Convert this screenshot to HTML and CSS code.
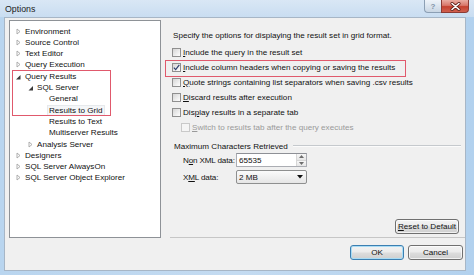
FILE: index.html
```html
<!DOCTYPE html>
<html>
<head>
<meta charset="utf-8">
<link rel="stylesheet" href="styles.css">
</head>
<body>
<div class="window">
  <div class="titlebar">
    <span class="title">Options</span>
    <div class="caption-btns">
      <div class="cbtn help">?</div>
      <div class="cbtn close">
        <svg width="11" height="9" viewBox="0 0 11 9"><path d="M2 1.5 L9 7.5 M9 1.5 L2 7.5" stroke="#5a1d17" stroke-width="3" stroke-linecap="round"/><path d="M2 1.5 L9 7.5 M9 1.5 L2 7.5" stroke="#ffffff" stroke-width="1.6" stroke-linecap="round"/></svg>
      </div>
    </div>
  </div>
  <div class="client">
    <div class="main">
      <div class="tree">
        <div class="node l0"><span class="arr"><svg width="9" height="11"><polygon points="1,3 4,5.5 1,8" fill="none" stroke="#a6a6a6" stroke-width="0.9"/></svg></span>Environment</div>
        <div class="node l0"><span class="arr"><svg width="9" height="11"><polygon points="1,3 4,5.5 1,8" fill="none" stroke="#a6a6a6" stroke-width="0.9"/></svg></span>Source Control</div>
        <div class="node l0"><span class="arr"><svg width="9" height="11"><polygon points="1,3 4,5.5 1,8" fill="none" stroke="#a6a6a6" stroke-width="0.9"/></svg></span>Text Editor</div>
        <div class="node l0"><span class="arr"><svg width="9" height="11"><polygon points="1,3 4,5.5 1,8" fill="none" stroke="#a6a6a6" stroke-width="0.9"/></svg></span>Query Execution</div>
        <div class="hl-group">
          <div class="node l0"><span class="arr"><svg width="9" height="11"><polygon points="4.5,4 4.5,8.5 0,8.5" fill="#3a3a3a"/></svg></span>Query Results</div>
          <div class="node l1"><span class="arr"><svg width="9" height="11"><polygon points="5,4 5,8.5 0.5,8.5" fill="#3a3a3a"/></svg></span>SQL Server</div>
          <div class="node l2"><span class="arr"></span>General</div>
          <div class="node l2"><span class="arr"></span><span class="sel">Results to Grid</span></div>
        </div>
        <div class="node l2"><span class="arr"></span>Results to Text</div>
        <div class="node l2"><span class="arr"></span>Multiserver Results</div>
        <div class="node l1"><span class="arr"><svg width="9" height="11"><polygon points="1,3 4,5.5 1,8" fill="none" stroke="#a6a6a6" stroke-width="0.9"/></svg></span>Analysis Server</div>
        <div class="node l0"><span class="arr"><svg width="9" height="11"><polygon points="1,3 4,5.5 1,8" fill="none" stroke="#a6a6a6" stroke-width="0.9"/></svg></span>Designers</div>
        <div class="node l0"><span class="arr"><svg width="9" height="11"><polygon points="1,3 4,5.5 1,8" fill="none" stroke="#a6a6a6" stroke-width="0.9"/></svg></span>SQL Server AlwaysOn</div>
        <div class="node l0"><span class="arr"><svg width="9" height="11"><polygon points="1,3 4,5.5 1,8" fill="none" stroke="#a6a6a6" stroke-width="0.9"/></svg></span>SQL Server Object Explorer</div>
      </div>
      <div class="pane">
        <div class="desc">Specify the options for displaying the result set in grid format.</div>
        <div class="checks">
          <div class="chk"><span class="box"></span><span><u>I</u>nclude the query in the result set</span></div>
          <div class="chk marked"><span class="box"><svg width="7" height="7" viewBox="0 0 7 7"><path d="M0.8 3.6 L2.7 5.6 L6.3 0.9" fill="none" stroke="#2c3f6e" stroke-width="1.2"/></svg></span><span><u>I</u>nclude column headers when copying or saving the results</span></div>
          <div class="chk"><span class="box"></span><span><u>Q</u>uote strings containing list separators when saving .csv results</span></div>
          <div class="chk"><span class="box"></span><span><u>D</u>iscard results after execution</span></div>
          <div class="chk"><span class="box"></span><span>Dis<u>p</u>lay results in a separate tab</span></div>
          <div class="chk disabled"><span class="box"></span><span><u>S</u>witch to results tab after the query executes</span></div>
        </div>
        <div class="group"><span>Maximum Characters Retrieved</span><span class="gline"></span></div>
        <div class="form">
          <div class="frow">
            <span class="flabel">N<u>o</u>n XML data:</span>
            <div class="input"><span class="ival">65535</span>
              <span class="spin">
                <span class="sbtn"><svg width="5" height="3"><polygon points="0,3 2.5,0 5,3" fill="#6d6d6d"/></svg></span>
                <span class="sbtn"><svg width="5" height="3"><polygon points="0,0 2.5,3 5,0" fill="#6d6d6d"/></svg></span>
              </span>
            </div>
          </div>
          <div class="frow">
            <span class="flabel">X<u>M</u>L data:</span>
            <div class="combo"><span class="ival">2 MB</span><svg width="6" height="4"><polygon points="0,0 6,0 3,3.5" fill="#111"/></svg></div>
          </div>
        </div>
        <button class="btn reset"><u>R</u>eset to Default</button>
        <div class="sep"></div>
      </div>
    </div>
    <div class="footer">
      <button class="btn ok">OK</button>
      <button class="btn cancel">Cancel</button>
    </div>
  </div>
</div>
</body>
</html>
```

FILE: styles.css
```css
* { box-sizing: border-box; }
html, body { margin: 0; padding: 0; }
body {
  width: 474px;
  height: 275px;
  overflow: hidden;
  background: linear-gradient(90deg, #b9d5ef, #c4dbf1 50%, #b2d1ee);
  font-family: "Liberation Sans", Arial, sans-serif;
  font-size: 8.1px;
  color: #000;
}
.window { display: flex; flex-direction: column; height: 275px; }
.titlebar {
  height: 17px;
  flex: none;
  display: flex;
  justify-content: space-between;
  align-items: flex-start;
  padding-left: 5px;
  background: linear-gradient(#d9e7f5, #c9ddf1);
}
.title { font-size: 8.8px; line-height: 19px; color: #1b1b1b; }
.caption-btns { display: flex; margin-right: 5px; }
.cbtn { height: 13px; display: flex; align-items: center; justify-content: center; }
.help {
  width: 17px;
  border: 1px solid #8c9fb4;
  border-top: none;
  border-right: none;
  border-radius: 0 0 0 4px;
  background: linear-gradient(#eef3f9, #dbe5ef 50%, #c9d6e3);
  color: #8193a8;
  font-size: 8px;
  font-weight: bold;
}
.close {
  width: 28px;
  border: 1px solid #8b3b34;
  border-top: none;
  border-radius: 0 0 4px 0;
  background: linear-gradient(#e9aca2, #d9776a 45%, #c5412f 55%, #d0604f);
}
.client {
  flex: 1;
  margin: 0 8px 4px 4px;
  border: 1px solid #a7b6c6;
  background: #f0f0f0;
  display: flex;
  flex-direction: column;
}
.main { display: flex; padding: 2px 0 0 4px; }
.tree {
  width: 152px;
  height: 218px;
  flex: none;
  border: 1px solid #8e9297;
  background: #fff;
  padding-top: 4.4px;
}
.node {
  display: flex;
  align-items: center;
  height: 11.3px;
  white-space: nowrap;
  color: #111;
}
.node.l0 { padding-left: 6px; }
.node.l1 { padding-left: 18px; }
.node.l2 { padding-left: 30px; }
.arr { width: 9px; height: 11px; flex: none; display: flex; }
.sel {
  background: #f4f6f8;
  outline: 1px solid #e6e9ec;
  padding: 0 1px;
  margin-left: -1px;
}
.hl-group { position: relative; }
.hl-group::after {
  content: "";
  position: absolute;
  left: 2px;
  top: -0.5px;
  width: 97px;
  bottom: 0;
  border: 1px solid #e0596c;
  pointer-events: none;
}
.pane {
  flex: 1;
  height: 218px;
  display: flex;
  flex-direction: column;
  padding: 9.5px 4px 0 11px;
}
.desc { line-height: 11px; padding-left: 1px; white-space: nowrap; color: #111; }
.checks { margin-top: 4px; }
.chk {
  display: flex;
  align-items: center;
  height: 15px;
  position: relative;
  white-space: nowrap;
  color: #111;
}
.box {
  width: 9px;
  height: 9px;
  flex: none;
  margin-right: 2px;
  border: 1px solid #8f8f8f;
  background: linear-gradient(135deg, #d5d5d5, #f2f2f2 70%, #fdfdfd);
  display: flex;
  align-items: center;
  justify-content: center;
}
.chk.marked::after {
  content: "";
  position: absolute;
  left: -7px;
  top: 0;
  width: 239px;
  height: 15px;
  border: 1px solid #e0596c;
  pointer-events: none;
}
.chk.disabled { padding-left: 9px; color: #9a9a9a; }
.chk.disabled .box { border-color: #c9c9c9; background: #f5f5f5; }
.group {
  margin-top: 6px;
  height: 11px;
  display: flex;
  align-items: center;
  padding-left: 2px;
  white-space: nowrap;
  color: #111;
}
.gline {
  flex: 1;
  height: 2px;
  margin-left: 5px;
  border-top: 1px solid #c5c9cd;
  border-bottom: 1px solid #fbfbfb;
}
.form { margin-top: 1.5px; padding-left: 11px; display: flex; flex-direction: column; gap: 3px; }
.frow { display: flex; align-items: center; height: 14px; color: #111; }
.flabel { width: 53px; flex: none; white-space: nowrap; letter-spacing: -0.15px; }
.input {
  width: 71px;
  height: 14px;
  border: 1px solid #abadb3;
  border-top-color: #8e9096;
  background: #fff;
  display: flex;
  align-items: center;
  justify-content: space-between;
}
.ival { padding-left: 2px; }
.spin { width: 10px; height: 12px; display: flex; flex-direction: column; }
.sbtn {
  flex: 1;
  display: flex;
  align-items: center;
  justify-content: center;
  background: linear-gradient(#f7f7f7, #e6e6e6);
  border-left: 1px solid #d6d6d6;
}
.sbtn + .sbtn { border-top: 1px solid #d6d6d6; }
.combo {
  width: 71px;
  height: 14px;
  border: 1px solid #8e8f8f;
  border-radius: 2px;
  background: linear-gradient(#fbfbfb, #f0f0f0 50%, #e5e5e5);
  display: flex;
  align-items: center;
  justify-content: space-between;
  padding-right: 3px;
}
.btn {
  font: inherit;
  color: #111;
  height: 15px;
  padding: 0;
  border: 1px solid #707070;
  border-radius: 3px;
  background: linear-gradient(#f3f3f3, #ebebeb 48%, #dddddd 52%, #cfcfcf);
  line-height: 13px;
  text-align: center;
  box-shadow: inset 0 0 0 1px rgba(255,255,255,0.7);
}
.reset {
  margin-top: auto;
  margin-bottom: 3px;
  margin-right: 2px;
  align-self: flex-end;
  width: 64px;
}
.sep { height: 1px; background: #c6c6c6; margin-left: -2px; margin-right: -4px; flex: none; }
.footer {
  flex: 1;
  display: flex;
  justify-content: flex-end;
  align-items: flex-start;
  gap: 4px;
  padding: 7px 2px 0 0;
}
.ok { width: 54px; border-color: #3c7fb1; box-shadow: inset 0 0 0 1px #a9dcf5; }
.cancel { width: 55px; }
```
